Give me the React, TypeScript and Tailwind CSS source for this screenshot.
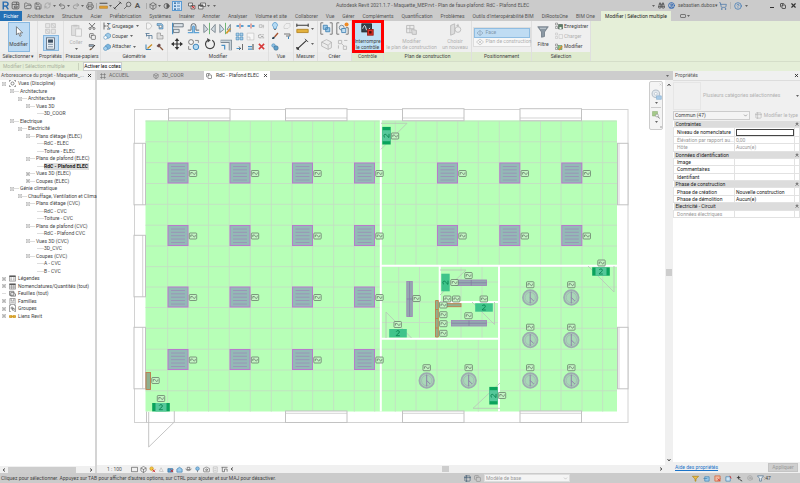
import type { ReactNode } from "react";
import {
  Binoculars,
  Bolt,
  Box,
  Camera,
  ChevronDown,
  CircleHelp,
  CircleUser,
  Copy,
  FolderOpen,
  Frame,
  Printer,
  Redo2,
  RefreshCw,
  Save,
  ShoppingCart,
  Table2,
  Undo2,
  X,
} from "lucide-react";

/* -------------------------------------------------------------------------- */
/*                                    Data                                    */
/* -------------------------------------------------------------------------- */

type NodeKind = "open" | "closed" | "leaf" | "sheet";

interface TreeNode {
  label: string;
  level: number;
  kind: NodeKind;
  active?: boolean;
  icon?: "views" | "legend" | "table" | "sheets" | "family" | "group" | "link";
}

const TREE: TreeNode[] = [
  { label: "Vues (Discipline)", level: 0, kind: "open", icon: "views" },
  { label: "Architecture", level: 1, kind: "open" },
  { label: "Architecture", level: 2, kind: "open" },
  { label: "Vues 3D", level: 3, kind: "open" },
  { label: "3D_COOR", level: 4, kind: "leaf" },
  { label: "Electrique", level: 1, kind: "open" },
  { label: "Electricité", level: 2, kind: "open" },
  { label: "Plans d'étage (ELEC)", level: 3, kind: "open" },
  { label: "RdC - ELEC", level: 4, kind: "leaf" },
  { label: "Toiture - ELEC", level: 4, kind: "leaf" },
  { label: "Plans de plafond (ELEC)", level: 3, kind: "open" },
  { label: "RdC - Plafond ELEC", level: 4, kind: "leaf", active: true },
  { label: "Vues 3D (ELEC)", level: 3, kind: "closed" },
  { label: "Coupes (ELEC)", level: 3, kind: "closed" },
  { label: "Génie climatique", level: 1, kind: "open" },
  { label: "Chauffage, Ventilation et Clima", level: 2, kind: "open" },
  { label: "Plans d'étage (CVC)", level: 3, kind: "open" },
  { label: "RdC - CVC", level: 4, kind: "leaf" },
  { label: "Toiture - CVC", level: 4, kind: "leaf" },
  { label: "Plans de plafond (CVC)", level: 3, kind: "open" },
  { label: "RdC - Plafond CVC", level: 4, kind: "leaf" },
  { label: "Vues 3D (CVC)", level: 3, kind: "open" },
  { label: "3D_CVC", level: 4, kind: "leaf" },
  { label: "Coupes (CVC)", level: 3, kind: "open" },
  { label: "A - CVC", level: 4, kind: "leaf" },
  { label: "B - CVC", level: 4, kind: "leaf" },
  { label: "Légendes", level: 0, kind: "closed", icon: "legend" },
  { label: "Nomenclatures/Quantités (tout)", level: 0, kind: "closed", icon: "table" },
  { label: "Feuilles (tout)", level: 0, kind: "sheet", icon: "sheets" },
  { label: "Familles", level: 0, kind: "closed", icon: "family" },
  { label: "Groupes", level: 0, kind: "closed", icon: "group" },
  { label: "Liens Revit", level: 0, kind: "closed", icon: "link" },
];

const INDENT = ["pl-[2px]", "pl-[10px]", "pl-[18px]", "pl-[26px]", "pl-[37px]"];

const TABS = [
  "Architecture",
  "Structure",
  "Acier",
  "Préfabrication",
  "Systèmes",
  "Insérer",
  "Annoter",
  "Analyser",
  "Volume et site",
  "Collaborer",
  "Vue",
  "Gérer",
  "Compléments",
  "Quantification",
  "Problèmes",
  "Outils d'interopérabilité BIM",
  "DiRootsOne",
  "BIM One",
];

interface PropertyGroup {
  name: string;
  rows: { name: string; value: string; muted?: boolean; field?: boolean }[];
}

const PROPERTIES: PropertyGroup[] = [
  {
    name: "Contraintes",
    rows: [
      { name: "Niveau de nomenclature", value: "", field: true },
      { name: "Élévation par rapport au...", value: "0,00", muted: true },
      { name: "Hôte", value: "Aucun(e)", muted: true },
    ],
  },
  {
    name: "Données d'identification",
    rows: [
      { name: "Image", value: "" },
      { name: "Commentaires", value: "" },
      { name: "Identifiant", value: "" },
    ],
  },
  {
    name: "Phase de construction",
    rows: [
      { name: "Phase de création", value: "Nouvelle construction" },
      { name: "Phase de démolition", value: "Aucun(e)" },
    ],
  },
  {
    name: "Electricité - Circuit",
    rows: [{ name: "Données électriques", value: "", muted: true }],
  },
];

/* -------------------------------------------------------------------------- */
/*                                   Icons                                    */
/* -------------------------------------------------------------------------- */

const Glyph = ({ size = 8, children }: { size?: number; children: ReactNode }) => (
  <svg
    width={size}
    height={size}
    viewBox="0 0 16 16"
    fill="none"
    stroke="#555"
    strokeWidth="1.5"
    className="shrink-0"
    aria-hidden="true"
  >
    {children}
  </svg>
);

const Caret = () => (
  <svg width="3" height="2" viewBox="0 0 6 4" className="shrink-0" aria-hidden="true">
    <path d="M0 0h6L3 4z" fill="#666" />
  </svg>
);

const icons = {
  revit: (
    <Glyph size={9}>
      <path d="M4 15V2h5a3.5 3.5 0 0 1 0 7H5M9 9l4 6" stroke="#2a6db0" strokeWidth="2.6" />
    </Glyph>
  ),
  home: (
    <Glyph size={9}>
      <rect x="2" y="2" width="12" height="12" rx="2" />
      <path d="M2 6h12M6 9h5v3H6zM10 2v4" />
    </Glyph>
  ),
  measure: (
    <Glyph size={9}>
      <path d="M1 4h14" stroke="#333" />
      <path d="M1 9h14v4H1z" fill="#e0a030" stroke="#b57a1e" strokeWidth="1" />
    </Glyph>
  ),
  aligned: (
    <Glyph size={9}>
      <path d="M2 14 14 2M1 11l4 4M11 1l4 4" stroke="#333" />
    </Glyph>
  ),
  tag: (
    <Glyph size={9}>
      <path d="m2 14 5-5" />
      <circle cx="10" cy="6" r="4" />
    </Glyph>
  ),
  section: (
    <Glyph size={8}>
      <circle cx="7" cy="8" r="5" />
      <path d="m7 2 7 6-7 6z" fill="#555" stroke="none" />
    </Glyph>
  ),
  thin: (
    <Glyph size={8}>
      <path d="M2 2h4M2 8h4M2 14h4" strokeWidth="2.5" stroke="#1f5c96" />
      <path d="M8 2h6M8 8h6M8 14h6" stroke="#1f5c96" />
    </Glyph>
  ),
  closeHidden: (
    <Glyph size={8}>
      <path d="M1 2h8v6H1zM6 7h8v7H6z" fill="#e8e8e8" />
      <path d="m8 8 5 5m0-5-5 5" stroke="#cf2b2b" strokeWidth="2" />
    </Glyph>
  ),
  switchWin: (
    <Glyph size={8}>
      <path d="M5 2h10v7H5zM1 6h9v8H1z" fill="#e8e8e8" />
      <path d="M1 7h9" strokeWidth="2.5" />
    </Glyph>
  ),
  cursor: (
    <Glyph size={11}>
      <path d="M5 1v12l3-3 2 5 2-1-2-4h4z" fill="#fff" stroke="#555" strokeWidth="1" />
    </Glyph>
  ),
  typeProps: (
    <Glyph size={13}>
      <path d="M2 2h5v5H2zM9 2h5v5H9zM2 9h5v5H2zM9 9h5v5H9z" stroke="#c4c4c4" fill="#e6e6e6" strokeWidth="1" />
      <path d="m9 2 5 5M2 9l5 5" stroke="#c4c4c4" strokeWidth="1" />
    </Glyph>
  ),
  props: (
    <Glyph size={13}>
      <rect x="3" y="1" width="10" height="14" fill="#e9eef3" stroke="#5a6a7a" strokeWidth="1" />
      <path d="M5 3h6v4H5z" fill="#3a4d60" stroke="none" />
      <path d="M5 9h6M5 12h6" stroke="#7b8fa3" strokeWidth="1.2" />
    </Glyph>
  ),
  paste: (
    <Glyph size={13}>
      <rect x="2" y="2" width="9" height="12" fill="#dedede" stroke="#c2c2c2" strokeWidth="1" />
      <rect x="4" y="1" width="5" height="2" fill="#c2c2c2" stroke="none" />
      <rect x="7" y="6" width="7" height="9" fill="#f2f2f2" stroke="#c2c2c2" strokeWidth="1" />
    </Glyph>
  ),
  cut: (
    <Glyph size={8}>
      <path d="m2 2 9 10M14 2 5 12" stroke="#444" />
      <circle cx="4" cy="13" r="2" />
      <circle cx="12" cy="13" r="2" />
    </Glyph>
  ),
  matchType: (
    <Glyph size={8}>
      <path d="M2 3h9v4H2z" fill="#8fa4b6" strokeWidth="1" />
      <path d="m14 4-7 8" stroke="#333" strokeWidth="2" />
      <path d="M3 14c0-3 3-4 5-2-1 2-3 3-5 2z" fill="#7d5b3c" stroke="none" />
    </Glyph>
  ),
  cope: (
    <Glyph size={8}>
      <path d="M2 1v14M2 8h5M8 3h5l-4 5 5 6H8" stroke="#444" />
      <path d="M12 3h3M12 13h3" stroke="#5b9bd0" strokeWidth="2" />
    </Glyph>
  ),
  cutGeo: (
    <Glyph size={8}>
      <path d="m5 5 5-3 5 3v5l-5 3-5-3z" fill="#9fcbe8" stroke="#3b7fb0" strokeWidth="1" />
      <circle cx="5" cy="11" r="3.5" fill="#fff" stroke="#3b7fb0" strokeWidth="1" />
    </Glyph>
  ),
  join: (
    <Glyph size={8}>
      <path d="m5 5 5-3 5 3v5l-5 3-5-3z" fill="#7bb5dd" stroke="#3b7fb0" strokeWidth="1" />
      <circle cx="5" cy="11" r="4" fill="#a9d2ee" stroke="#3b7fb0" strokeWidth="1" />
    </Glyph>
  ),
  ghost: (
    <Glyph size={8}>
      <path d="M3 2h6l5 6-5 6H3z" stroke="#bbb" fill="#f5f5f5" />
    </Glyph>
  ),
  split: (
    <Glyph size={8}>
      <path d="M2 3h9l3 3v8H6V7H2z" fill="#8ec1e6" stroke="#3f6f95" strokeWidth="1" />
      <circle cx="9" cy="9" r="2.5" fill="#fff" strokeWidth="1" />
    </Glyph>
  ),
  beam: (
    <Glyph size={8}>
      <path d="M1 3h8M3 3v6M3 7h11M8 7v7M14 7v7" stroke="#4a6f8f" />
    </Glyph>
  ),
  wallJoin: (
    <Glyph size={8}>
      <path d="M2 2h7v5h5v7H2z" fill="#ddd" stroke="#777" strokeWidth="1" />
    </Glyph>
  ),
  unjoin: (
    <Glyph size={8}>
      <path d="M2 3v10h10" stroke="#3b7fb0" strokeWidth="2" />
      <path d="m5 11 9-8" stroke="#c98c20" strokeWidth="2.5" />
    </Glyph>
  ),
  demolish: (
    <Glyph size={8}>
      <path d="m5 5 9 9" stroke="#8a5b43" strokeWidth="2.5" />
      <path d="m1 6 5-5 4 3-5 5z" fill="#6d4c4c" stroke="none" />
    </Glyph>
  ),
  align: (
    <Glyph size={13}>
      <path d="M2 1v14" stroke="#4a90c4" strokeWidth="1.5" />
      <path d="M3 2h12v4H3zM3 9h7v4H3z" fill="#dfe5ea" stroke="#5f6b75" strokeWidth="1" />
    </Glyph>
  ),
  offset: (
    <Glyph size={13}>
      <path d="M1 10h4V5a3 3 0 0 1 6 0v5h4" stroke="#5f6b75" strokeWidth="1.2" />
      <path d="M1 13h6V6a1 1 0 0 1 2 0v7h6" stroke="#5fa3d5" strokeWidth="1.6" />
    </Glyph>
  ),
  mirrorAxis: (
    <Glyph size={13}>
      <path d="M1 3v10l5-4zM15 3v10l-5-4z" fill="#d5dde3" stroke="#6e7a84" strokeWidth="1" />
      <path d="M8 1v14" stroke="#4fa858" strokeWidth="1" />
    </Glyph>
  ),
  mirrorDraw: (
    <Glyph size={13}>
      <path d="M1 3v10l5-4zM14 3v9l-4-3z" fill="#cfe2f0" stroke="#6e7a84" strokeWidth="1" />
      <path d="M8 1v14" stroke="#4fa858" strokeWidth="1" />
      <path d="m9 14 5-6" stroke="#d8982b" strokeWidth="2" />
    </Glyph>
  ),
  move: (
    <Glyph size={12}>
      <path d="M8 2v12M2 8h12" stroke="#333" strokeWidth="1.6" />
      <path d="m8 0 3 4H5zM8 16l3-4H5zM0 8l4-3v6zM16 8l-4-3v6z" fill="#333" stroke="none" />
    </Glyph>
  ),
  copyEl: (
    <Glyph size={13}>
      <circle cx="5" cy="5" r="3" fill="#f6f6f6" stroke="#666" strokeWidth="1" />
      <circle cx="11" cy="11" r="3.4" fill="#b6d9f0" stroke="#3b86bd" strokeWidth="1.2" />
      <path d="M10 3h4v3M2 10v4h3" stroke="#777" strokeWidth="1" />
    </Glyph>
  ),
  rotate: (
    <Glyph size={12}>
      <path d="M11 3a6 6 0 1 1-6 0" stroke="#444" strokeWidth="1.6" />
      <path d="m4 0 5 3-4 3z" fill="#444" stroke="none" />
    </Glyph>
  ),
  trim: (
    <Glyph size={13}>
      <path d="M2 4h12v11" stroke="#7a8893" strokeWidth="4" />
      <path d="M2 4h12v11" stroke="#c9d3da" strokeWidth="2" />
      <path d="M7 14V9H3" stroke="#4a90c4" strokeWidth="1.5" />
    </Glyph>
  ),
  splitEl: (
    <Glyph size={8}>
      <path d="M1 8h5M10 8h5" stroke="#5a9fd0" strokeWidth="4" />
      <path d="M8 3v10" stroke="#c0392b" />
    </Glyph>
  ),
  arrayEl: (
    <Glyph size={9}>
      <path d="M2 2h5v5H2zM9 2h5v5H9zM2 9h5v5H2zM9 9h5v5H9z" fill="#a8cfea" stroke="#3b7fb0" strokeWidth="1" />
    </Glyph>
  ),
  scaleEl: (
    <Glyph size={9}>
      <path d="M2 2h12v12H2zM2 9h5v5" stroke="#b9b9b9" fill="#f7f7f7" strokeWidth="1" />
    </Glyph>
  ),
  trimOne: (
    <Glyph size={8}>
      <path d="M1 11h9" stroke="#4a90c4" strokeWidth="2" />
      <path d="M13 2v12M6 7l3 4-3 3" stroke="#444" />
    </Glyph>
  ),
  trimMany: (
    <Glyph size={8}>
      <path d="M2 7h8M2 12h8" stroke="#4a90c4" strokeWidth="2.5" />
      <path d="M12 2v12" stroke="#444" strokeWidth="2" />
    </Glyph>
  ),
  pin: (
    <Glyph size={7}>
      <path d="M3 4h6v6H3zM10 7h4M12 4v8" stroke="#aaa" />
    </Glyph>
  ),
  link: (
    <Glyph size={7}>
      <path d="M8 4H4a3 3 0 0 0 0 7h4M10 4h3M10 11h4M7 8h5" stroke="#888" />
    </Glyph>
  ),
  remove: (
    <Glyph size={7}>
      <path d="m2 2 12 12M14 2 2 14" stroke="#d63a3a" strokeWidth="3.5" />
    </Glyph>
  ),
  bulb: (
    <Glyph size={8}>
      <path d="M5 10a5 5 0 1 1 6 0v3H5z" fill="#b5daf3" stroke="#3f8cc5" strokeWidth="1.2" />
      <path d="M6 15h4" />
    </Glyph>
  ),
  brush: (
    <Glyph size={8}>
      <path d="m14 2-7 8" stroke="#a6522f" strokeWidth="2.5" />
      <path d="M2 14c0-4 3-5 5-4 2 2-1 5-5 4z" fill="#2d3f4d" stroke="none" />
    </Glyph>
  ),
  ghostBox: (
    <Glyph size={8}>
      <path d="m2 8 4-5h8v6l-4 4H2z" fill="#efefef" stroke="#bbb" strokeWidth="1" />
    </Glyph>
  ),
  linework: (
    <Glyph size={8}>
      <path d="M2 4h12v4H6" stroke="#777" strokeWidth="2" />
      <path d="M11 9v5" stroke="#3b86bd" strokeWidth="2" />
    </Glyph>
  ),
  displace: (
    <Glyph size={8}>
      <circle cx="5" cy="5" r="3.5" fill="#8ec1e6" stroke="#3b7fb0" strokeWidth="1" />
      <circle cx="10" cy="10" r="4.5" fill="#5f9fca" stroke="#34617f" strokeWidth="1" />
    </Glyph>
  ),
  ruler: (
    <Glyph size={13}>
      <path d="M1 4h14M1 2v4M15 2v4" stroke="#333" strokeWidth="1.2" />
      <path d="M1 9h14v4H1z" fill="#e3b13d" stroke="#b0801f" strokeWidth="1" />
    </Glyph>
  ),
  dimension: (
    <Glyph size={13}>
      <path d="M2 13 13 3" stroke="#333" strokeWidth="1.4" />
      <path d="m0 11 4 4M11 1l4 4" stroke="#333" strokeWidth="1" />
      <circle cx="2" cy="13" r="1.5" fill="#333" stroke="none" />
    </Glyph>
  ),
  assembly: (
    <Glyph size={13}>
      <path d="M4 1H1v14h3M12 1h3v14h-3" stroke="#777" strokeWidth="1.2" />
      <path d="M4 4h5v5H4zM7 7h5v5H7z" fill="#9dcaea" stroke="#3b7fb0" strokeWidth="1" />
    </Glyph>
  ),
  groupNew: (
    <Glyph size={13}>
      <path d="M4 1H1v14h3M12 7h3v8h-3" stroke="#777" strokeWidth="1.2" />
      <circle cx="7" cy="7" r="3" fill="#dfe8ee" stroke="#6b7a86" strokeWidth="1" />
      <path d="M7 8h5v5H7z" fill="#c4dff1" stroke="#3b7fb0" strokeWidth="1" />
      <circle cx="13" cy="3" r="2.5" fill="#f08a24" stroke="none" />
    </Glyph>
  ),
  parts: (
    <Glyph size={13}>
      <path d="m2 5 6-3 6 3v7l-4 2-8-4zM2 5l8 4v5M10 9l4-4" fill="#ececec" stroke="#b2b2b2" strokeWidth="1" />
    </Glyph>
  ),
  similar: (
    <Glyph size={13}>
      <path d="M3 3h4v4H3zM9 10h4v4H9zM10 3h4M7 7l3 3M3 13V9" stroke="#bcbcbc" strokeWidth="1.2" />
    </Glyph>
  ),
  system: (
    <Glyph size={13}>
      <rect x="1" y="1" width="12" height="10" fill="#33434d" stroke="#222" strokeWidth="1" />
      <path d="M2 7c2-5 3-5 4-1s2 4 5 0" stroke="#e8eef2" strokeWidth="1.2" />
      <rect x="8" y="8" width="7" height="7" fill="#d93025" stroke="#8f1a12" strokeWidth="1" />
      <rect x="10" y="10" width="3" height="3" fill="#4a0f0b" stroke="none" />
    </Glyph>
  ),
  workplane: (
    <Glyph size={13}>
      <path d="M2 3h9v9H2zM2 7h9M6 3v9" fill="#ececec" stroke="#b5b5b5" strokeWidth="1" />
      <path d="m8 8 6 1v5H9z" fill="#dcdcdc" stroke="#b5b5b5" strokeWidth="1" />
    </Glyph>
  ),
  pick: (
    <Glyph size={13}>
      <path d="m2 3 5-2v12l-5 2z" fill="#ddd" stroke="#b5b5b5" strokeWidth="1" />
      <circle cx="11" cy="8" r="3.5" fill="#eee" stroke="#b5b5b5" strokeWidth="1" />
      <path d="M9 3h3M11 1v4" stroke="#b5b5b5" strokeWidth="1" />
    </Glyph>
  ),
  filter: (
    <Glyph size={12}>
      <path d="M1 1h14l-5 7v6l-4 1V8z" fill="#8b98a3" stroke="#6b7781" strokeWidth="1" />
      <path d="M4 3h8" stroke="#d8dfe4" strokeWidth="1" />
    </Glyph>
  ),
  face: (
    <Glyph size={8}>
      <path d="m2 8 6-5 6 5-6 5z" stroke="#8aa5bd" fill="#c9def0" />
      <path d="M8 3v10" stroke="#8aa5bd" />
    </Glyph>
  ),
  plane: (
    <Glyph size={8}>
      <path d="m1 8 7-6 7 6-7 6zM5 5l6 6M11 5l-6 6" stroke="#b6b6b6" strokeWidth="1.2" />
    </Glyph>
  ),
  selSave: (
    <Glyph size={8}>
      <path d="M1 2h4v4H1zM1 9h4v4H1z" stroke="#666" strokeWidth="1" />
      <path d="M7 5h8v9H7z" fill="#5f7f68" stroke="#30463a" strokeWidth="1" />
      <path d="M9 10h4v4H9z" fill="#e6f0e8" stroke="none" />
    </Glyph>
  ),
  selLoad: (
    <Glyph size={8}>
      <path d="M1 2h4v4H1zM1 9h4v4H1zM8 5h7v8H8z" stroke="#c4c4c4" strokeWidth="1.2" />
    </Glyph>
  ),
  selEdit: (
    <Glyph size={8}>
      <path d="M1 2h4v4H1zM1 9h4v4H1z" stroke="#666" strokeWidth="1" />
      <path d="M6 5h8v8H6z" fill="#8fc28a" stroke="#4a7a48" strokeWidth="1" />
      <path d="m8 14 6-8" stroke="#e08a2a" strokeWidth="2.5" />
    </Glyph>
  ),
  collapse: (
    <Glyph size={4}>
      <path d="m3 8 5-5 5 5M3 14l5-5 5 5" stroke="#333" strokeWidth="3" />
    </Glyph>
  ),
};

const treeIcons: Record<NonNullable<TreeNode["icon"]>, ReactNode> = {
  views: (
    <Glyph size={7}>
      <path d="M1 4V1h3M12 1h3v3M15 12v3h-3M4 15H1v-3" />
      <circle cx="8" cy="8" r="3.5" />
    </Glyph>
  ),
  legend: (
    <Glyph size={7}>
      <path d="M1 2h14v12H1zM3 7h4M3 11h4M9 7h4M9 11h4" stroke="#777" />
      <path d="M1 3h14" strokeWidth="3" />
    </Glyph>
  ),
  table: (
    <Glyph size={7}>
      <path d="M1 2h14v12H1zM1 7h14M1 11h14M6 3v11M11 3v11" stroke="#888" />
      <path d="M1 3h14" strokeWidth="3" />
    </Glyph>
  ),
  sheets: (
    <Glyph size={7}>
      <path d="M1 3h10v9H1zM4 6h7l4 3v5H4z" fill="#f4f4f4" />
    </Glyph>
  ),
  family: (
    <Glyph size={7}>
      <path d="M2 1h12v14H2zM5 1v6h6V1M4 11h8" stroke="#777" />
    </Glyph>
  ),
  group: (
    <Glyph size={7}>
      <path d="M4 1H1v14h3M12 1h3v14h-3M5 5h4v4H5zM8 8h4v4H8z" stroke="#666" />
    </Glyph>
  ),
  link: (
    <Glyph size={7}>
      <path d="M1 6h6v4H1zM9 6h6v4H9zM5 8h6" fill="#e8b13a" stroke="#d09a24" strokeWidth="2" />
    </Glyph>
  ),
};

/* -------------------------------------------------------------------------- */
/*                                 Title bar                                  */
/* -------------------------------------------------------------------------- */

const QuickButton = ({ label, children, active }: { label: string; children: ReactNode; active?: boolean }) => (
  <button
    aria-label={label}
    className={`flex h-[10px] shrink-0 items-center justify-center ${
      active ? "w-[10px] border border-[#5a9bd4] bg-[#cfe4f7]" : "w-[9px]"
    }`}
  >
    {children}
  </button>
);

const TitleBar = () => (
  <header className="flex h-[11px] shrink-0 items-center text-[#555]">
    <div className="flex w-[266px] items-center gap-px pl-px">
      <QuickButton label="Revit">{icons.revit}</QuickButton>
      <QuickButton label="Accueil">{icons.home}</QuickButton>
      <span className="w-px" />
      <QuickButton label="Ouvrir"><FolderOpen size={8} /></QuickButton>
      <QuickButton label="Enregistrer"><Save size={8} /></QuickButton>
      <QuickButton label="Synchroniser"><RefreshCw size={7} color="#999" /></QuickButton>
      <Caret />
      <QuickButton label="Annuler"><Undo2 size={8} /></QuickButton>
      <Caret />
      <QuickButton label="Rétablir"><Redo2 size={8} color="#888" /></QuickButton>
      <Caret />
      <QuickButton label="Imprimer"><Printer size={8} /></QuickButton>
      <span className="mx-px h-[6px] w-px bg-[#aaa]" />
      <QuickButton label="Mesurer">{icons.measure}</QuickButton>
      <Caret />
      <QuickButton label="Cote alignée">{icons.aligned}</QuickButton>
      <QuickButton label="Étiquette">{icons.tag}</QuickButton>
      <button aria-label="Texte" className="w-[9px] text-[8px] leading-[10px] font-bold">A</button>
      <span className="ml-[3px] h-[6px] w-px bg-[#aaa]" />
      <QuickButton label="Vue 3D"><Box size={8} /></QuickButton>
      <Caret />
      <QuickButton label="Coupe">{icons.section}</QuickButton>
      <QuickButton label="Lignes fines" active>{icons.thin}</QuickButton>
      <span className="w-[3px]" />
      <QuickButton label="Fermer les vues inactives">{icons.closeHidden}</QuickButton>
      <QuickButton label="Changer de fenêtre">{icons.switchWin}</QuickButton>
      <Caret />
      <span className="w-px" />
      <Caret />
    </div>
    <h1 className="flex-1 pl-[70px] font-normal whitespace-nowrap">
      Autodesk Revit 2021.1.7 - Maquette_MEP.rvt - Plan de faux-plafond: RdC - Plafond ELEC
    </h1>
    <div className="flex w-[116px] items-center gap-[3px]">
      <Caret />
      <Binoculars size={7} strokeWidth={3} />
      <CircleUser size={7} color="#2a62b0" strokeWidth={3} />
      <span className="w-[38px] whitespace-nowrap">sebastien.dubos▾</span>
      <ShoppingCart size={8} color="#3c6ea5" />
      <span className="h-[7px] w-px bg-[#b5b5b5]" />
      <CircleHelp size={8} color="#2f6fb4" />
      <Caret />
    </div>
    <div className="flex w-[32px] items-center gap-[2px] text-[#333]">
      <button aria-label="Réduire" className="flex w-[8px] justify-center pt-1"><span className="h-px w-[4px] bg-[#333]" /></button>
      <button aria-label="Restaurer" className="flex w-[9px] justify-center"><Copy size={6} strokeWidth={3} /></button>
      <button aria-label="Fermer" className="flex w-[9px] justify-center"><X size={7} strokeWidth={4} /></button>
    </div>
  </header>
);

const RibbonTabs = () => (
  <nav className="flex h-[10px] shrink-0 items-center text-[#555]">
    <button className="h-full w-[22px] bg-[#2370b5] text-white">Fichier</button>
    <div className="ml-[5px] flex w-[574px] items-center justify-between pr-[6px]">
      {TABS.map((tab) => (
        <button key={tab} className="whitespace-nowrap">{tab}</button>
      ))}
    </div>
    <button className="h-full w-[70px] bg-[#e5efd8] whitespace-nowrap text-[#222]">
      Modifier | Sélection multiple
    </button>
    <button aria-label="Affichage du ruban" className="ml-[9px] flex items-center gap-px">
      <span className="flex h-[4px] w-[6px] items-center justify-center rounded-[1px] border border-[#777]" />
      <Caret />
    </button>
  </nav>
);

/* -------------------------------------------------------------------------- */
/*                                   Ribbon                                   */
/* -------------------------------------------------------------------------- */

interface PanelProps {
  title: string;
  width: string;
  green?: boolean;
  children: ReactNode;
}

const Panel = ({ title, width, green, children }: PanelProps) => (
  <section className={`flex h-full shrink-0 flex-col border-r border-[#dfdfdf] ${width}`}>
    <div className="flex h-[31px] items-center justify-center bg-[#efefef]">{children}</div>
    <h2
      className={`flex flex-1 items-center justify-center font-normal whitespace-nowrap ${
        green ? "bg-[#dfebcf]" : "bg-[#ececec]"
      }`}
    >
      {title}
    </h2>
  </section>
);

const Tool = ({ label, children }: { label: string; children: ReactNode }) => (
  <button aria-label={label} className="flex h-full w-full items-center justify-center">
    {children}
  </button>
);

const TextTool = ({ icon, label, caret, muted }: { icon: ReactNode; label: string; caret?: boolean; muted?: boolean }) => (
  <button className={`flex items-center gap-px whitespace-nowrap ${muted ? "text-[#b0b0b0]" : ""}`}>
    {icon}
    <span className="pr-px">{label}</span>
    {caret && <Caret />}
  </button>
);

const Ribbon = () => (
  <div className="flex h-[40px] shrink-0 bg-[#e5efd8] text-[#444]">
    <Panel title="Sélectionner ▾" width="w-[38px]">
      <button className="flex h-[30px] w-[22px] flex-col items-center justify-center gap-1 border border-[#88b8e0] bg-[#bedbf4]">
        {icons.cursor}
        Modifier
      </button>
    </Panel>

    <Panel title="Propriétés" width="w-[26px]">
      <div className="flex flex-col items-center">
        <Tool label="Propriétés du type">{icons.typeProps}</Tool>
        <button aria-label="Propriétés" className="flex h-[16px] w-[16px] items-center justify-center border border-[#88b8e0] bg-[#bedbf4]">
          {icons.props}
        </button>
      </div>
    </Panel>

    <Panel title="Presse-papiers" width="w-[37px]">
      <button className="flex w-[20px] flex-col items-center gap-[2px] text-[#b0b0b0]">
        {icons.paste}
        Coller
        <Caret />
      </button>
      <div className="grid h-full w-[12px] grid-rows-3">
        <Tool label="Couper">{icons.cut}</Tool>
        <Tool label="Copier"><Copy size={7} /></Tool>
        <Tool label="Attribuer">{icons.matchType}</Tool>
      </div>
    </Panel>

    <Panel title="Géométrie" width="w-[67px]">
      <div className="grid h-full w-[41px] grid-rows-3 items-center">
        <TextTool icon={icons.cope} label="Grugeage" caret />
        <TextTool icon={icons.cutGeo} label="Couper" caret />
        <TextTool icon={icons.join} label="Attacher" caret />
      </div>
      <div className="grid h-full w-[21px] grid-cols-2 grid-rows-3">
        <Tool label="Assemblage de toits">{icons.ghost}</Tool>
        <Tool label="Scinder la face">{icons.split}</Tool>
        <Tool label="Attaches de poutre">{icons.beam}</Tool>
        <Tool label="Jonctions de murs">{icons.wallJoin}</Tool>
        <Tool label="Peinture">{icons.unjoin}</Tool>
        <Tool label="Démolir">{icons.demolish}</Tool>
      </div>
    </Panel>

    <Panel title="Modifier" width="w-[101px]">
      <div className="grid h-full w-[65px] grid-cols-4 grid-rows-2">
        <Tool label="Aligner">{icons.align}</Tool>
        <Tool label="Décaler">{icons.offset}</Tool>
        <Tool label="Miroir axe">{icons.mirrorAxis}</Tool>
        <Tool label="Miroir dessiner">{icons.mirrorDraw}</Tool>
        <Tool label="Déplacer">{icons.move}</Tool>
        <Tool label="Copier">{icons.copyEl}</Tool>
        <Tool label="Rotation">{icons.rotate}</Tool>
        <Tool label="Ajuster">{icons.trim}</Tool>
      </div>
      <div className="grid h-full w-[33px] grid-cols-3 grid-rows-3">
        <Tool label="Scinder">{icons.splitEl}</Tool>
        <Tool label="Scinder avec espace">{icons.splitEl}</Tool>
        <Tool label="Libérer">{icons.pin}</Tool>
        <Tool label="Réseau">{icons.arrayEl}</Tool>
        <Tool label="Échelle">{icons.scaleEl}</Tool>
        <Tool label="Verrouiller">{icons.link}</Tool>
        <Tool label="Prolonger un élément">{icons.trimOne}</Tool>
        <Tool label="Prolonger plusieurs éléments">{icons.trimMany}</Tool>
        <Tool label="Supprimer">{icons.remove}</Tool>
      </div>
    </Panel>

    <Panel title="Vue" width="w-[25px]">
      <div className="grid h-full w-[23px] grid-cols-2 grid-rows-3">
        <Tool label="Masquer">{icons.bulb}</Tool>
        <Tool label="Boîte">{icons.ghostBox}</Tool>
        <Tool label="Remplacer">{icons.brush}</Tool>
        <Tool label="Lignes">{icons.linework}</Tool>
        <Tool label="Déplacer la vue">{icons.displace}</Tool>
      </div>
    </Panel>

    <Panel title="Mesurer" width="w-[24px]">
      <div className="grid h-full w-[20px] grid-rows-2">
        <button aria-label="Mesurer" className="flex items-center gap-[2px]">{icons.ruler}<Caret /></button>
        <button aria-label="Cote" className="flex items-center gap-[2px]">{icons.dimension}<Caret /></button>
      </div>
    </Panel>

    <Panel title="Créer" width="w-[34px]">
      <div className="grid h-full w-[32px] grid-cols-2 grid-rows-2">
        <Tool label="Assemblage">{icons.assembly}</Tool>
        <Tool label="Groupe">{icons.groupNew}</Tool>
        <Tool label="Pièces">{icons.parts}</Tool>
        <Tool label="Similaire">{icons.similar}</Tool>
      </div>
    </Panel>

    <Panel title="Contrôle" width="w-[32px]" green>
      <button className="z-10 flex h-[33px] w-[32px] shrink-0 flex-col items-center justify-between border-[3px] border-[#ff0000] bg-[#bfe0f4] leading-[6px] whitespace-nowrap">
        {icons.system}
        <span>
          Interrompre
          <br />
          le contrôle
        </span>
      </button>
    </Panel>

    <Panel title="Plan de construction" width="w-[88px]" green>
      <button className="flex w-[55px] flex-col items-center gap-[2px] leading-[6px] whitespace-nowrap text-[#b0b0b0]">
        {icons.workplane}
        <span>Modifier<br />le plan de construction</span>
      </button>
      <button className="flex w-[32px] flex-col items-center gap-[2px] leading-[6px] whitespace-nowrap text-[#b0b0b0]">
        {icons.pick}
        <span>Choisir<br />un nouveau</span>
      </button>
    </Panel>

    <Panel title="Positionnement" width="w-[60px]" green>
      <div className="flex h-[20px] w-[58px] flex-col border border-[#ddd] bg-[#f7f7f7] text-[#b0b0b0]">
        <button className="flex flex-1 items-center gap-[2px] border border-[#8fbde2] bg-[#bfdcf3] pl-px text-[#8298ab]">
          {icons.face}
          Face
        </button>
        <button className="flex flex-1 items-center gap-[2px] pl-[2px] whitespace-nowrap">
          {icons.plane}
          Plan de construction
        </button>
      </div>
    </Panel>

    <Panel title="Sélection" width="w-[59px]" green>
      <button className="flex w-[20px] flex-col items-center gap-[3px]">
        {icons.filter}
        Filtre
      </button>
      <div className="grid h-full w-[36px] grid-rows-3 items-center pl-[2px]">
        <TextTool icon={icons.selSave} label="Enregistrer" />
        <TextTool icon={icons.selLoad} label="Charger" muted />
        <TextTool icon={icons.selEdit} label="Modifier" />
      </div>
    </Panel>
  </div>
);

const OptionsBar = () => (
  <div className="flex h-[10px] shrink-0 items-center border-t border-[#d5dec9] bg-[#e5efd8]">
    <span className="w-[79px] border-r border-[#c9d2bd] pl-[3px] text-[#aab29f]">Modifier | Sélection multiple</span>
    <button className="ml-[4px] h-[9px] w-[39px] border border-[#ccc] bg-white whitespace-nowrap text-black">
      Activer les cotes
    </button>
  </div>
);

/* -------------------------------------------------------------------------- */
/*                              Project browser                               */
/* -------------------------------------------------------------------------- */

const Toggle = ({ closed }: { closed: boolean }) => (
  <svg width="4" height="4" viewBox="0 0 8 8" fill="none" stroke="#aaa" className="shrink-0" aria-hidden="true">
    <rect x="0.5" y="0.5" width="7" height="7" />
    <path d={closed ? "M2 4h4M4 2v4" : "M2 4h4"} stroke="#555" />
  </svg>
);

const ScrollArrow = ({ d }: { d: string }) => (
  <svg width="4" height="4" viewBox="0 0 8 8" fill="none" stroke="#555" strokeWidth="2" className="shrink-0" aria-hidden="true">
    <path d={d} />
  </svg>
);

const LEFT = "M6 1 2 4l4 3";
const RIGHT = "m2 1 4 3-4 3";
const UP = "m1 6 3-4 3 4";
const DOWN = "m1 2 3 4 3-4";

const ProjectBrowser = () => (
  <aside className="flex w-[97px] shrink-0 flex-col border-r-2 border-[#d4d4d4] bg-white">
    <div className="flex h-[9px] shrink-0 items-center justify-between bg-[#f0f0f0] pr-[3px] pl-px text-[#555]">
      <span className="whitespace-nowrap">Arborescence du projet - Maquette_...</span>
      <button aria-label="Fermer l'arborescence"><X size={5} strokeWidth={4} color="#222" /></button>
    </div>
    <ul className="grid h-[240px] shrink-0 auto-rows-fr">
      {TREE.map((node, i) => (
        <li key={i} className={`flex min-h-0 items-center whitespace-nowrap ${INDENT[node.level]}`}>
          {node.kind === "open" || node.kind === "closed" ? (
            <Toggle closed={node.kind === "closed"} />
          ) : (
            <span className="w-[4px] border-t border-[#ddd]" />
          )}
          {node.icon ? (
            <span className="mr-[2px] ml-[3px]">{treeIcons[node.icon]}</span>
          ) : (
            <span className={node.kind === "leaf" ? "w-[3px] border-t border-[#ddd]" : "mr-px w-[5px] border-t border-[#ddd]"} />
          )}
          <span className={node.active ? "bg-[#dcdcdc] pr-px font-bold text-[#222]" : ""}>{node.label}</span>
        </li>
      ))}
    </ul>
    <div className="mt-auto flex h-[7px] shrink-0 items-center gap-[2px] bg-[#f0f0f0] px-[2px]">
      <ScrollArrow d={LEFT} />
      <span className="h-[6px] w-[68px] bg-[#cdcdcd]" />
      <span className="flex-1" />
      <ScrollArrow d={RIGHT} />
    </div>
  </aside>
);

/* -------------------------------------------------------------------------- */
/*                                Ceiling plan                                */
/* -------------------------------------------------------------------------- */

const GRID_X = [
  167.7, 187.7, 208.5, 229.3, 250.3, 271.3, 292, 312.7, 333.7, 354.3, 374.7, 395.3, 416, 437, 457.8, 478.3, 499.3, 520,
  540.5, 561, 582, 602.7,
];
const GRID_Y = [141.8, 162.7, 183.5, 204.3, 225.2, 246, 266.7, 287, 307.5, 328.3, 349.2, 370, 390.8];

const PANELS_LEFT = [167.5, 229.5, 292, 354];
const PANELS_Y = [162.5, 225, 286.5, 349];
const PANELS_RIGHT = [437, 499.3, 561.3];

const DOWNLIGHTS = [
  [530.2, 297.5],
  [571.3, 297.5],
  [530.2, 340],
  [571.3, 340],
  [530.2, 380.5],
  [571.3, 380.5],
  [426.7, 380.5],
  [468.7, 380.5],
];

const TAGS = [
  [395, 136],
  [161, 398.5],
  [601.5, 263],
  [502, 395.5],
  [397.7, 324.5],
  [454.5, 282.5],
  [483.8, 299],
  [416.5, 298.5],
  [468.5, 275.5],
  [468.5, 315.7],
  [447.2, 299],
  [456.2, 299],
  [443.3, 305],
  [443.3, 314.7],
  [443.3, 323.7],
  [443.3, 333.3],
  [155.5, 380.5],
];

const Tag = ({ x, y }: { x: number; y: number }) => (
  <g transform={`translate(${x} ${y})`} fill="none" stroke="#5f6f62" strokeWidth="0.7">
    <rect x="-3.7" y="-3" width="7.4" height="6" rx="0.8" fill="#c3f5c3" />
    <path d="M-2.2 1v-2h1.400c1 0 1 2 2 2s1-1 1.200-2" />
  </g>
);

const LightPanel = ({ x, y }: { x: number; y: number }) => (
  <g>
    <rect x={x + 0.5} y={y + 0.5} width="20" height="20" fill="#93b9b6" stroke="#b77bcb" />
    <path
      d={`M${x + 3.5} ${y + 4}h14M${x + 3.5} ${y + 7.3}h14M${x + 3.5} ${y + 10.7}h14M${x + 3.5} ${y + 14}h14M${x + 3.5} ${y + 17.5}h14`}
      stroke="#9c8ab8"
      strokeWidth="0.8"
    />
    <Tag x={x + 25.5} y={y + 11} />
  </g>
);

const Downlight = ({ x, y }: { x: number; y: number }) => (
  <g fill="none" stroke="#9eabb0">
    <circle cx={x} cy={y} r="7.3" strokeWidth="1.8" fill="#a8d8b6" />
    <circle cx={x} cy={y} r="5.2" strokeWidth="0.6" />
    <path d={`M${x} ${y - 6}v12M${x} ${y}l3.5 3.5`} stroke="#8c7ba8" strokeWidth="0.9" />
    <Tag x={x} y={y - 12.8} />
  </g>
);

/* Emergency light: horizontal by default, rotated when upright */
const Emergency = ({ x, y, upright, plain }: { x: number; y: number; upright?: boolean; plain?: boolean }) => (
  <g transform={`translate(${x} ${y}) rotate(${upright ? -90 : 0})`}>
    <rect x="-8.8" y="-4.2" width="17.600" height="8.4" fill={plain ? "#3fc48a" : "#0aa35c"} />
    {!plain && <rect x="-5.5" y="-4.2" width="11" height="8.4" fill="#55c79a" />}
    <path d="M-1.8-1.5c.5-1.500 3.200-1.500 3.200.2C1.400.6-1.500.8-1.800 2.500h3.600" fill="none" stroke="#0b8550" strokeWidth="0.9" />
  </g>
);

const Tube = ({ x, y, w, h }: { x: number; y: number; w: number; h: number }) => (
  <g>
    <rect x={x} y={y} width={w} height={h} fill="#93a9b0" stroke="#a087b8" strokeWidth="0.9" />
    <path d={`M${x} ${y + h / 2}h${w}M${x + w / 2} ${y}v${h}`} stroke="#8577a3" strokeWidth="0.7" />
  </g>
);

const Plan = () => (
  <svg
    width="576"
    height="383"
    viewBox="97 80 576 383"
    className="block shrink-0"
    role="img"
    aria-label="Plan de faux-plafond du rez-de-chaussée"
  >
    {/* Outer shell and room fill */}
    <rect x="134.5" y="109.5" width="493.5" height="313" fill="#fff" stroke="#d2d2d2" />
    <rect x="145.5" y="120.5" width="471.5" height="291" fill="#b7ffb7" />

    {/* Ceiling tiles */}
    <g stroke="#c3dfc3" strokeWidth="0.9">
      {GRID_X.map((x) => (
        <path key={x} d={`M${x} 121v290.5`} />
      ))}
      {GRID_Y.map((y) => (
        <path key={y} d={`M145.5 ${y}h471.5`} />
      ))}
      <path d="M145.5 121h471" />
    </g>
    <rect x="382" y="267" width="116" height="71" fill="#b7ffb7" />
    <path
      d="M398.7 267v71M419.5 267v71M461 267v71M482 267v71M382 282h116M382 302h58M382 322.5h116"
      stroke="#c3dfc3"
      strokeWidth="0.9"
    />

    {/* Partition walls */}
    <path
      d="M380.8 120v291.5M381 265.7h236M499 265.7v145.8M381 338.8h118M439.7 266v36M439.7 302h59"
      stroke="#fff"
      strokeWidth="2"
    />

    {/* Windows */}
    <g fill="#fff" stroke="#c2c2c2">
      {[168.5, 285.5, 402.5, 520].map((x) => (
        <g key={x}>
          <rect x={x} y="108.7" width="61.5" height="12" />
          <path d={`M${x} 118h61.5`} strokeWidth="0.7" />
        </g>
      ))}
      {[285.5, 402.5, 520].map((x) => (
        <g key={x}>
          <rect x={x} y="411" width="61.5" height="11.5" />
          <path d={`M${x} 413.3h61.5`} strokeWidth="0.7" />
        </g>
      ))}
      {[143.3, 235.3, 327.3].map((y) => (
        <g key={y}>
          <rect x="134" y={y} width="11.5" height="61.5" />
          <path d={`M142.7 ${y}v61.5`} strokeWidth="0.7" />
        </g>
      ))}
      {[143.3, 327.3].map((y) => (
        <g key={y}>
          <rect x="617.5" y={y} width="10.5" height="61.5" />
          <path d={`M619 ${y}v61.5`} strokeWidth="0.7" />
        </g>
      ))}
    </g>

    {/* Door swings */}
    <g fill="none" stroke="#b9c9b9" strokeWidth="0.9">
      <path d="M381 123.3h26l-26 26M588 266l26 26v-26M500 383l-27 25.3h27M386 338v-26l25.5 26M440 270h26l-26 25M472 302l22.5 22.5V302" />
      <path d="M146.5 411.5v11M148.7 412v35l25.6-25v-11" stroke="#bdbdbd" />
    </g>

    {/* Lighting */}
    {PANELS_Y.map((y) => PANELS_LEFT.map((x) => <LightPanel key={`${x}-${y}`} x={x} y={y} />))}
    {PANELS_Y.slice(0, 2).map((y) => PANELS_RIGHT.map((x) => <LightPanel key={`${x}-${y}`} x={x} y={y} />))}
    {DOWNLIGHTS.map(([x, y]) => (
      <Downlight key={`${x}-${y}`} x={x} y={y} />
    ))}
    <Tube x={406.8} y={281.5} w={5.5} h={35} />
    <Tube x={456} y={280} w={30.5} h={5.5} />
    <Tube x={451.5} y={320.5} w={35} h={5.5} />

    {/* Emergency units */}
    <Emergency x={386.5} y={135.7} upright />
    <Emergency x={161} y={407.2} />
    <Emergency x={601} y={271.5} />
    <Emergency x={493.5} y={395.7} upright />
    <Emergency x={398} y={333.2} plain />
    <Emergency x={445.5} y={282.5} upright plain />
    <Emergency x={484} y={307.5} plain />

    {/* Switchboards */}
    <g fill="#8fb08f" stroke="#c07a4a" strokeWidth="0.9">
      <path d="M435.5 300.5h2.8v36.5h-2.8zM435.5 309.5h2.8M435.5 318.5h2.8M435.5 328h2.8" />
      <rect x="446" y="303.7" width="15" height="3" />
      <rect x="146" y="372.5" width="4.5" height="17" />
    </g>
    {TAGS.map(([x, y]) => (
      <Tag key={`${x}-${y}`} x={x} y={y} />
    ))}
  </svg>
);

const ViewTabs = () => (
  <div className="flex h-[9px] shrink-0 items-center bg-[#cdcdcd] text-[#666]">
    <button className="flex w-[53px] items-center gap-[3px] pl-[3px]"><Frame size={6} />ACCUEIL</button>
    <button className="flex w-[54px] items-center gap-[3px] pl-[3px]"><Box size={6} />3D_COOR</button>
    <button className="flex h-full w-[66px] items-center justify-between bg-white px-[2px] whitespace-nowrap text-[#333]">
      <Copy size={6} />
      RdC - Plafond ELEC
      <X size={5} strokeWidth={4} />
    </button>
    <span className="flex-1" />
    <button aria-label="Liste des vues" className="pr-1"><Caret /></button>
  </div>
);

const NavigationBar = () => (
  <div className="absolute top-[1px] right-[10px] flex h-[49px] w-[14px] flex-col items-center justify-between rounded-[2px] border border-[#ccc] bg-[#f4f4f4] py-px">
    <X size={3} color="#999" className="self-end" />
    <button aria-label="Disque de navigation">
      <Glyph size={11}>
        <circle cx="7" cy="7" r="5.5" fill="#e2e8ee" stroke="#b5bfc9" strokeWidth="1.5" />
        <circle cx="7" cy="7" r="2" fill="#fff" stroke="#b5bfc9" strokeWidth="1" />
        <path d="M8 10h7v5H8z" fill="#a8cbe8" stroke="#8fb4d2" strokeWidth="1" />
      </Glyph>
    </button>
    <Caret />
    <span className="h-px w-[10px] bg-[#ccc]" />
    <button aria-label="Zoom région">
      <Glyph size={8}>
        <path d="M1 1h10v9H1z" fill="#a5c98a" stroke="#86ab6c" strokeWidth="1" />
        <circle cx="10" cy="9" r="3" fill="#eee" stroke="#888" strokeWidth="1" />
        <path d="m12 11 3 4" />
      </Glyph>
    </button>
    <Caret />
    <span className="h-[2px] w-[2px] self-end rounded-full bg-[#bbb]" />
  </div>
);

const ViewControls = () => (
  <div className="flex h-[8px] shrink-0 items-center gap-[2px] bg-[#f0f0f0] pl-[10px] text-[#555]">
    <span className="w-[22px]">1 : 100</span>
    <Glyph size={7}><path d="M1 3h14v10H1z" /></Glyph>
    <Box size={7} />
    <Glyph size={7}>
      <circle cx="6" cy="6" r="4" fill="#f4c542" stroke="#c99516" />
      <path d="m8 8 6 6m0-6-6 6" stroke="#cf2b2b" strokeWidth="2" />
    </Glyph>
    <Glyph size={7}><path d="m3 12 4-8 5 9z" stroke="#bbb" /></Glyph>
    <Glyph size={7}>
      <path d="M2 6h11v8H2z" fill="#5a9fd0" stroke="#2f6b97" />
      <path d="m8 8 6 6m0-6-6 6" stroke="#cf2b2b" strokeWidth="2" />
    </Glyph>
    <Glyph size={7}><path d="M2 14V7l6-4 6 4v7z" fill="#9dcaea" stroke="#3b7fb0" /></Glyph>
    <Glyph size={7}><path d="M1 6c4 6 10 6 14 0M5 3h6v5H5z" /></Glyph>
    <Glyph size={7}><circle cx="8" cy="6" r="4" fill="#8ec1e6" stroke="#3b7fb0" /><path d="M8 10v4" /></Glyph>
    <Camera size={7} />
    <Glyph size={7}><path d="M3 2h9v12H3zM5 6h5M5 10h5" stroke="#bbb" /></Glyph>
    <Glyph size={7}><path d="M1 3h14M3 3v10h5V7h6v6" /></Glyph>
    <ScrollArrow d={LEFT} />
    <span className="ml-[206px] h-[6px] w-[7px] bg-[#cdcdcd]" />
    <span className="flex-1" />
    <ScrollArrow d={RIGHT} />
    <span className="w-[8px]" />
  </div>
);

const Workspace = () => (
  <main className="flex min-w-0 flex-1 flex-col bg-white">
    <ViewTabs />
    <div className="relative min-h-0 flex-1 overflow-hidden">
      <Plan />
      <NavigationBar />
      <div className="absolute top-0 right-0 flex h-full w-[8px] flex-col items-center justify-between bg-[#f0f0f0] py-[3px]">
        <ScrollArrow d={UP} />
        <span className="h-[7px] w-[6px] bg-[#cdcdcd]" />
        <ScrollArrow d={DOWN} />
      </div>
    </div>
    <ViewControls />
  </main>
);

/* -------------------------------------------------------------------------- */
/*                                 Properties                                 */
/* -------------------------------------------------------------------------- */

const PropertiesPanel = () => (
  <aside className="flex w-[127px] shrink-0 flex-col bg-[#f0f0f0]">
    <div className="flex h-[9px] shrink-0 items-center justify-between pr-px pl-[2px] text-[#555]">
      Propriétés
      <button aria-label="Fermer les propriétés"><X size={5} strokeWidth={4} color="#222" /></button>
    </div>
    <div className="flex h-[30px] shrink-0 items-center border-t border-[#ddd] pr-px text-[#b0b0b0]">
      <span className="mr-[2px] h-[28px] w-[28px] border border-[#e6e6e6]" />
      <span className="flex-1 whitespace-nowrap">Plusieurs catégories sélectionnées</span>
      <Caret />
    </div>
    <div className="flex h-[11px] shrink-0 items-center justify-between pr-[2px]">
      <div className="relative">
        <select
          aria-label="Catégorie"
          className="block h-[9px] w-[77px] appearance-none border border-[#ccc] bg-[#f4f4f4] pl-px text-[5px] leading-[7px]"
        >
          <option>Commun (47)</option>
        </select>
        <ChevronDown size={5} className="pointer-events-none absolute top-[2px] right-[2px]" />
      </div>
      <button className="flex items-center gap-[2px] whitespace-nowrap text-[#b0b0b0]">
        <Table2 size={7} />
        Modifier le type
      </button>
    </div>
    <div className="shrink-0 bg-white">
      <table className="h-[97px] w-full table-fixed border-collapse leading-[6px] whitespace-nowrap">
        <colgroup>
          <col />
          <col className="w-[60px]" />
          <col className="w-[5px]" />
        </colgroup>
        {PROPERTIES.map((group) => (
          <tbody key={group.name}>
            <tr className="bg-[#dcdcdc]">
              <th colSpan={2} className="p-0 pl-[2px] text-left font-normal text-[#222]">{group.name}</th>
              <td className="p-0">{icons.collapse}</td>
            </tr>
            {group.rows.map((row) => (
              <tr key={row.name} className={row.muted ? "text-[#999]" : "text-[#222]"}>
                <th className="border border-[#e2e2e2] p-0 pl-[3px] text-left font-normal">{row.name}</th>
                <td className="border border-[#e2e2e2] p-0 pl-px">
                  {row.field ? (
                    <input aria-label={row.name} className="block h-[7px] w-[58px] border border-[#444] text-[5px]" />
                  ) : (
                    row.value
                  )}
                </td>
                <td className="border border-[#e2e2e2] p-0" />
              </tr>
            ))}
          </tbody>
        ))}
      </table>
    </div>
    <div className="flex-1 bg-white" />
    <div className="flex h-[11px] shrink-0 items-center justify-between pr-[2px] pl-[2px]">
      <a href="#aide" className="text-[#1c74c8] underline">Aide des propriétés</a>
      <button className="h-[9px] w-[30px] border border-[#c4c4c4] bg-[#cfcfcf] text-[#999]">Appliquer</button>
    </div>
  </aside>
);

/* -------------------------------------------------------------------------- */
/*                                 Status bar                                 */
/* -------------------------------------------------------------------------- */

const StatusBar = () => (
  <footer className="flex h-[10px] shrink-0 items-center bg-[#cbcbcb] text-[#444]">
    <span className="flex-1 pl-px whitespace-nowrap">
      Cliquez pour sélectionner. Appuyez sur TAB pour afficher d'autres options, sur CTRL pour ajouter et sur MAJ pour désactiver.
    </span>
    <div className="flex w-[336px] items-center gap-[3px]">
      <Table2 size={7} color="#33516b" />
      <Copy size={7} color="#888" />
      <div className="relative">
        <select
          aria-label="Variante"
          className="block h-[8px] w-[86px] appearance-none border border-[#ddd] bg-[#f4f4f4] pl-px text-[5px] leading-[6px] text-[#999]"
        >
          <option>Modèle de base</option>
        </select>
        <ChevronDown size={5} color="#999" className="pointer-events-none absolute top-[2px] right-[2px]" />
      </div>
      <span className="flex-1" />
      <div className="flex w-[108px] items-center gap-1">
        <Glyph size={7}><path d="M1 3h14L9 9v5H7V9z" fill="#eec04a" stroke="#a87f16" /></Glyph>
        <Glyph size={7}><path d="M4 4h10v10H4zM1 8h9" fill="#9dcaea" stroke="#3b7fb0" /></Glyph>
        <Glyph size={7}><path d="M2 2h12v12H2z" fill="#f0b9a0" stroke="#cf5a2b" /><path d="m8 8 6 6m0-6-6 6" stroke="#cf2b2b" /></Glyph>
        <Glyph size={7}><path d="M2 4h10v10H2z" fill="#cfe4f4" stroke="#3b7fb0" /><path d="m11 2 3 6" stroke="#cf2b2b" strokeWidth="2" /></Glyph>
        <Glyph size={7}><path d="M2 6h8M6 2v8M8 10l6 4" stroke="#333" strokeWidth="2" /></Glyph>
        <Bolt size={6} color="#999" />
        <span className="flex items-center">
          <Glyph size={7}><path d="M1 2h14l-5 6v6H6V8z" fill="#eef3f7" stroke="#44698a" /></Glyph>
          :47
        </span>
      </div>
    </div>
  </footer>
);

/* -------------------------------------------------------------------------- */
/*                                    App                                     */
/* -------------------------------------------------------------------------- */

export default function App() {
  return (
    <div className="flex h-screen flex-col overflow-hidden bg-[#cbcbcb] font-[Roboto,sans-serif] text-[5px] leading-[7px] text-[#444]">
      <TitleBar />
      <RibbonTabs />
      <Ribbon />
      <OptionsBar />
      <div className="flex min-h-0 flex-1">
        <ProjectBrowser />
        <Workspace />
        <PropertiesPanel />
      </div>
      <StatusBar />
    </div>
  );
}
